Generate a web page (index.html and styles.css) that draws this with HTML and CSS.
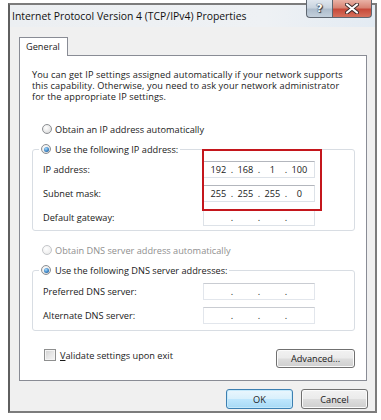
FILE: index.html
```html
<!DOCTYPE html>
<html>
<head>
<meta charset="utf-8">
<title>IPv4 Properties</title>
<link rel="stylesheet" href="styles.css">
</head>
<body>
<div class="window">
  <div class="titlebar">
    <span class="title">Internet Protocol Version 4 (TCP/IPv4) Properties</span>
    <div class="caption">
      <div class="cap help"><span>?</span></div>
      <div class="cap close">
        <svg width="14" height="11" viewBox="0 0 14 11">
          <path d="M2 1.5 L12 9.5 M12 1.5 L2 9.5" stroke="#3b2a2a" stroke-width="4" stroke-linecap="round"/>
          <path d="M2 1.5 L12 9.5 M12 1.5 L2 9.5" stroke="#ffffff" stroke-width="2.2" stroke-linecap="round"/>
        </svg>
      </div>
    </div>
  </div>
  <div class="client">
    <div class="tabs"><div class="tab">General</div></div>
    <div class="panel">
      <p class="intro">You can get IP settings assigned automatically if your network supports<br>this capability. Otherwise, you need to ask your network administrator<br>for the appropriate IP settings.</p>

      <div class="opt first"><span class="radio"></span><span>Obtain an IP address automatically</span></div>

      <fieldset class="group">
        <legend><span class="radio on"></span><span>Use the following IP address:</span></legend>
        <div class="rows ip">
          <div class="row">
            <span class="lbl">IP address:</span>
            <div class="field"><span class="seg">192</span><span class="dot">.</span><span class="seg">168</span><span class="dot">.</span><span class="seg">1</span><span class="dot">.</span><span class="seg">100</span></div>
          </div>
          <div class="row">
            <span class="lbl">Subnet mask:</span>
            <div class="field"><span class="seg">255</span><span class="dot">.</span><span class="seg">255</span><span class="dot">.</span><span class="seg">255</span><span class="dot">.</span><span class="seg">0</span></div>
          </div>
          <div class="row">
            <span class="lbl">Default gateway:</span>
            <div class="field"><span class="seg"></span><span class="dot">.</span><span class="seg"></span><span class="dot">.</span><span class="seg"></span><span class="dot">.</span><span class="seg"></span></div>
          </div>
        </div>
      </fieldset>

      <div class="opt dns disabled"><span class="radio"></span><span>Obtain DNS server address automatically</span></div>

      <fieldset class="group dnsgroup">
        <legend><span class="radio on"></span><span>Use the following DNS server addresses:</span></legend>
        <div class="rows dnsrows">
          <div class="row">
            <span class="lbl">Preferred DNS server:</span>
            <div class="field"><span class="seg"></span><span class="dot">.</span><span class="seg"></span><span class="dot">.</span><span class="seg"></span><span class="dot">.</span><span class="seg"></span></div>
          </div>
          <div class="row">
            <span class="lbl">Alternate DNS server:</span>
            <div class="field"><span class="seg"></span><span class="dot">.</span><span class="seg"></span><span class="dot">.</span><span class="seg"></span><span class="dot">.</span><span class="seg"></span></div>
          </div>
        </div>
      </fieldset>

      <div class="bottom">
        <div class="check"><span class="box"></span><span><u>V</u>alidate settings upon exit</span></div>
        <button class="btn adv">Advanced...</button>
      </div>

      <div class="highlight"></div>
    </div>
    <div class="actions">
      <button class="btn default">OK</button>
      <button class="btn">Cancel</button>
    </div>
  </div>
</div>
</body>
</html>
```

FILE: styles.css
```css
html, body {
  margin: 0;
  padding: 0;
  background: #ffffff;
}

body {
  font-family: "Open Sans", "Noto Sans", sans-serif;
  font-size: 9.2px;
  color: #1a1a1a;
}

.window {
  box-sizing: border-box;
  width: 369px;
  height: 410px;
  margin: 3px 0 0 8px;
  border: 2px solid #7c7c7c;
  border-left-color: #5f5f5f;
  background: #f0f0f0;
  display: flex;
  flex-direction: column;
}

.titlebar {
  height: 22px;
  display: flex;
  align-items: flex-start;
  background: linear-gradient(to right, #eceff2 0%, #eef1f4 70%, #e3ebf3 100%);
}

.title {
  padding-left: 2px;
  line-height: 22px;
  font-size: 10.4px;
  color: #111;
  white-space: nowrap;
}

.caption {
  margin-left: auto;
  margin-right: 3px;
  margin-top: -5px;
  display: flex;
}

.cap {
  box-sizing: border-box;
  height: 18px;
  border: 1px solid #5e6670;
  border-top: none;
  display: flex;
  align-items: center;
  justify-content: center;
}

.help {
  width: 26px;
  border-right: none;
  border-bottom-left-radius: 4px;
  background: linear-gradient(#dfe6ee 0%, #c9d4df 45%, #aebdcc 55%, #c3d0dc 100%);
}

.help span {
  font-family: "DejaVu Sans", sans-serif;
  font-weight: bold;
  font-size: 11px;
  color: #ffffff;
  text-shadow: 0 0 1px #2c3440, 0 0 1px #2c3440, 1px 1px 1px #2c3440;
}

.close {
  width: 40px;
  border-bottom-right-radius: 4px;
  background: linear-gradient(#e9b2a6 0%, #d88474 45%, #c74a3a 55%, #d6705c 100%);
}

.client {
  flex: 1;
  padding: 10px 7px 0 9px;
}

.tabs {
  display: flex;
}

.tab {
  position: relative;
  z-index: 1;
  box-sizing: border-box;
  width: 49px;
  height: 19px;
  margin-bottom: -1px;
  padding-left: 6px;
  line-height: 18px;
  background: #ffffff;
  border: 1px solid #898c95;
  border-bottom: none;
}

.panel {
  position: relative;
  box-sizing: border-box;
  width: 348px;
  height: 326px;
  padding: 13px 11px 0 12px;
  background: #ffffff;
  border: 1px solid #898c95;
}

.intro {
  margin: 0;
  line-height: 11px;
  letter-spacing: 0.1px;
  white-space: nowrap;
}

.opt {
  display: flex;
  align-items: center;
  height: 14px;
  gap: 3px;
  margin-left: 10px;
  white-space: nowrap;
}

.opt.first {
  margin-top: 20px;
}

.opt.dns {
  margin-top: 12px;
}

.disabled {
  color: #8f8f8f;
}

.radio {
  position: relative;
  box-sizing: border-box;
  width: 10px;
  height: 10px;
  border-radius: 50%;
  border: 1px solid #8c8f93;
  background: radial-gradient(circle at 40% 35%, #ffffff 0%, #e8e8e8 55%, #cfcfcf 100%);
  flex: none;
}

.disabled .radio {
  border-color: #c4c6c9;
  background: radial-gradient(circle at 40% 35%, #ffffff 0%, #f1f1f1 60%, #e4e4e4 100%);
}

.radio.on::after {
  content: "";
  position: absolute;
  left: 1.5px;
  top: 1.5px;
  width: 5px;
  height: 5px;
  border-radius: 50%;
  background: radial-gradient(circle at 40% 35%, #a9dcff 0%, #3d86c6 55%, #1c4f86 100%);
}

.group {
  margin: 6px 0 0 0;
  padding: 0 0 4px 10px;
  border: 1px solid #d8dde3;
  border-radius: 3px;
  min-width: 0;
}

.group legend {
  display: flex;
  align-items: center;
  gap: 4px;
  height: 14px;
  padding: 0 2px;
  margin-left: -4px;
  white-space: nowrap;
}

.dnsgroup {
  padding-bottom: 6px;
}

.rows {
  display: flex;
  flex-direction: column;
  gap: 7px;
  padding-top: 5px;
}

.rows.dnsrows {
  padding-top: 6px;
}

.row {
  display: flex;
  align-items: center;
  height: 17px;
}

.lbl {
  width: 160px;
  white-space: nowrap;
}

.field {
  box-sizing: border-box;
  width: 112px;
  height: 17px;
  display: flex;
  align-items: center;
  padding-left: 3px;
  background: #ffffff;
  border: 1px solid #dde2e8;
  border-top-color: #b3b6bd;
}

.dnsrows .field {
  border-color: #e2e6ec;
  border-top-color: #c9ccd2;
}

.seg {
  width: 23px;
  text-align: center;
}

.dot {
  width: 4px;
  text-align: center;
}

.bottom {
  display: flex;
  justify-content: space-between;
  align-items: flex-start;
  margin-top: 18px;
}

.check {
  display: flex;
  align-items: center;
  gap: 4px;
  height: 12px;
  margin-left: 12px;
}

.box {
  box-sizing: border-box;
  width: 12px;
  height: 12px;
  border: 1px solid #8e8f8f;
  background: linear-gradient(135deg, #cfcfcf 0%, #e6e6e6 50%, #f6f6f6 100%);
  box-shadow: inset 0 0 0 1px #f4f4f4;
}

.check u {
  text-decoration: underline;
}

.btn {
  box-sizing: border-box;
  font-family: inherit;
  font-size: 9.2px;
  color: #1a1a1a;
  height: 20px;
  width: 67px;
  padding: 0;
  border: 1px solid #707070;
  border-radius: 3px;
  background: linear-gradient(#f2f2f2 0%, #ebebeb 48%, #dddddd 52%, #cfcfcf 100%);
  box-shadow: inset 0 0 0 1px #fbfbfb;
}

.btn.adv {
  width: 79px;
  height: 19px;
}

.btn.default {
  border-color: #3c7fb1;
  background: linear-gradient(#eaf6fd 0%, #d9f0fc 48%, #bee6fd 52%, #a7d9f5 100%);
  box-shadow: inset 0 0 0 1px #c5e9fb;
}

.actions {
  display: flex;
  justify-content: flex-end;
  gap: 8px;
  margin-top: 8px;
}

.highlight {
  position: absolute;
  left: 182px;
  top: 93px;
  box-sizing: border-box;
  width: 120px;
  height: 62px;
  border: 2px solid #c4161c;
}
```
